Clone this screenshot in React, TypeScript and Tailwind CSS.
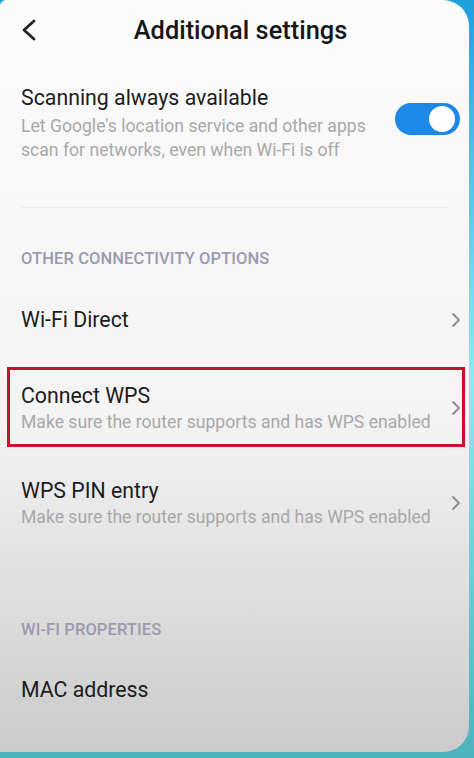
import { ReactNode } from "react";

const font = { fontFamily: "Roboto, 'Noto Sans', sans-serif" };

function Chevron() {
  return (
    <svg width="10" height="16" viewBox="0 0 10 16" className="shrink-0">
      <polyline
        points="2,2 8,8 2,14"
        fill="none"
        stroke="#8c8c8c"
        strokeWidth="1.8"
        strokeLinecap="round"
        strokeLinejoin="round"
      />
    </svg>
  );
}

function Toggle() {
  return (
    <div className="flex h-[32px] w-[65px] shrink-0 items-center justify-end rounded-full bg-[#1e88e6] pr-[5px]">
      <div className="h-[26px] w-[26px] rounded-full bg-white" />
    </div>
  );
}

function SectionHeader({ children }: { children: ReactNode }) {
  return (
    <div className="h-[20px] px-[21px] text-[16.5px] leading-[20px] font-medium tracking-[0.1px] text-[#9c9aae]">
      {children}
    </div>
  );
}

function Row({
  title,
  desc,
  highlight,
}: {
  title: string;
  desc?: string;
  highlight?: boolean;
}) {
  return (
    <div
      className={`relative flex items-center justify-between pl-[21px] pr-[8px] ${
        desc ? "h-[95px]" : "h-[80px]"
      }`}
    >
      <div className="flex flex-col">
        <span className="text-[21.3px] leading-[28px] text-[#1c1c1c]">{title}</span>
        {desc && (
          <span className="text-[17.6px] leading-[24px] text-[#a8a8a8]">{desc}</span>
        )}
      </div>
      <Chevron />
      {highlight && (
        <div className="pointer-events-none absolute top-[7px] left-[7px] h-[80px] w-[458px] border-[3px] border-[#c5112e]" />
      )}
    </div>
  );
}

export default function App() {
  return (
    <div
      className="h-[758px] w-[474px] overflow-hidden bg-linear-to-b from-[#1c9fdb] via-[#8fe9f1] to-[#4cb2bc]"
      style={font}
    >
      <div className="flex h-[752px] w-[469px] flex-col rounded-tl-[6px] rounded-tr-[26px] rounded-br-[26px] bg-linear-to-b from-[#fbfbfb] via-[#f4f4f4] via-55% to-[#cbcbcb]">
        {/* header */}
        <div className="relative flex h-[60px] items-center justify-center pl-[12px]">
          <svg
            width="20"
            height="24"
            viewBox="0 0 20 24"
            className="absolute top-[18px] left-[19px]"
          >
            <polyline
              points="15,3 5,12 15,21"
              fill="none"
              stroke="#222"
              strokeWidth="2.8"
              strokeLinecap="round"
              strokeLinejoin="round"
            />
          </svg>
          <h1 className="text-[25.4px] font-medium text-[#161616]">Additional settings</h1>
        </div>

        {/* scanning */}
        <div className="mt-[24px] flex items-start justify-between pl-[21px] pr-[9px]">
          <div className="flex flex-col">
            <span className="text-[21.3px] leading-[28px] text-[#1c1c1c]">
              Scanning always available
            </span>
            <span className="mt-[2px] text-[17.6px] leading-[24px] text-[#a8a8a8]">
              Let Google's location service and other apps
              <br />
              scan for networks, even when Wi-Fi is off
            </span>
          </div>
          <div className="mt-[19px]">
            <Toggle />
          </div>
        </div>

        <div className="mx-[21px] mt-[45px] h-px bg-[#ebebeb]" />

        <div className="mt-[41px]">
          <SectionHeader>OTHER CONNECTIVITY OPTIONS</SectionHeader>
        </div>
        <div className="mt-[11px]">
          <Row title="Wi-Fi Direct" />
          <Row
            title="Connect WPS"
            desc="Make sure the router supports and has WPS enabled"
            highlight
          />
          <Row
            title="WPS PIN entry"
            desc="Make sure the router supports and has WPS enabled"
          />
        </div>

        <div className="mx-[21px] mt-[27px] h-px bg-[#dadada]" />

        <div className="mt-[42px]">
          <SectionHeader>WI-FI PROPERTIES</SectionHeader>
        </div>
        <div className="mt-[36px] px-[21px] text-[21.3px] leading-[28px] text-[#1c1c1c]">
          MAC address
        </div>
      </div>
    </div>
  );
}
